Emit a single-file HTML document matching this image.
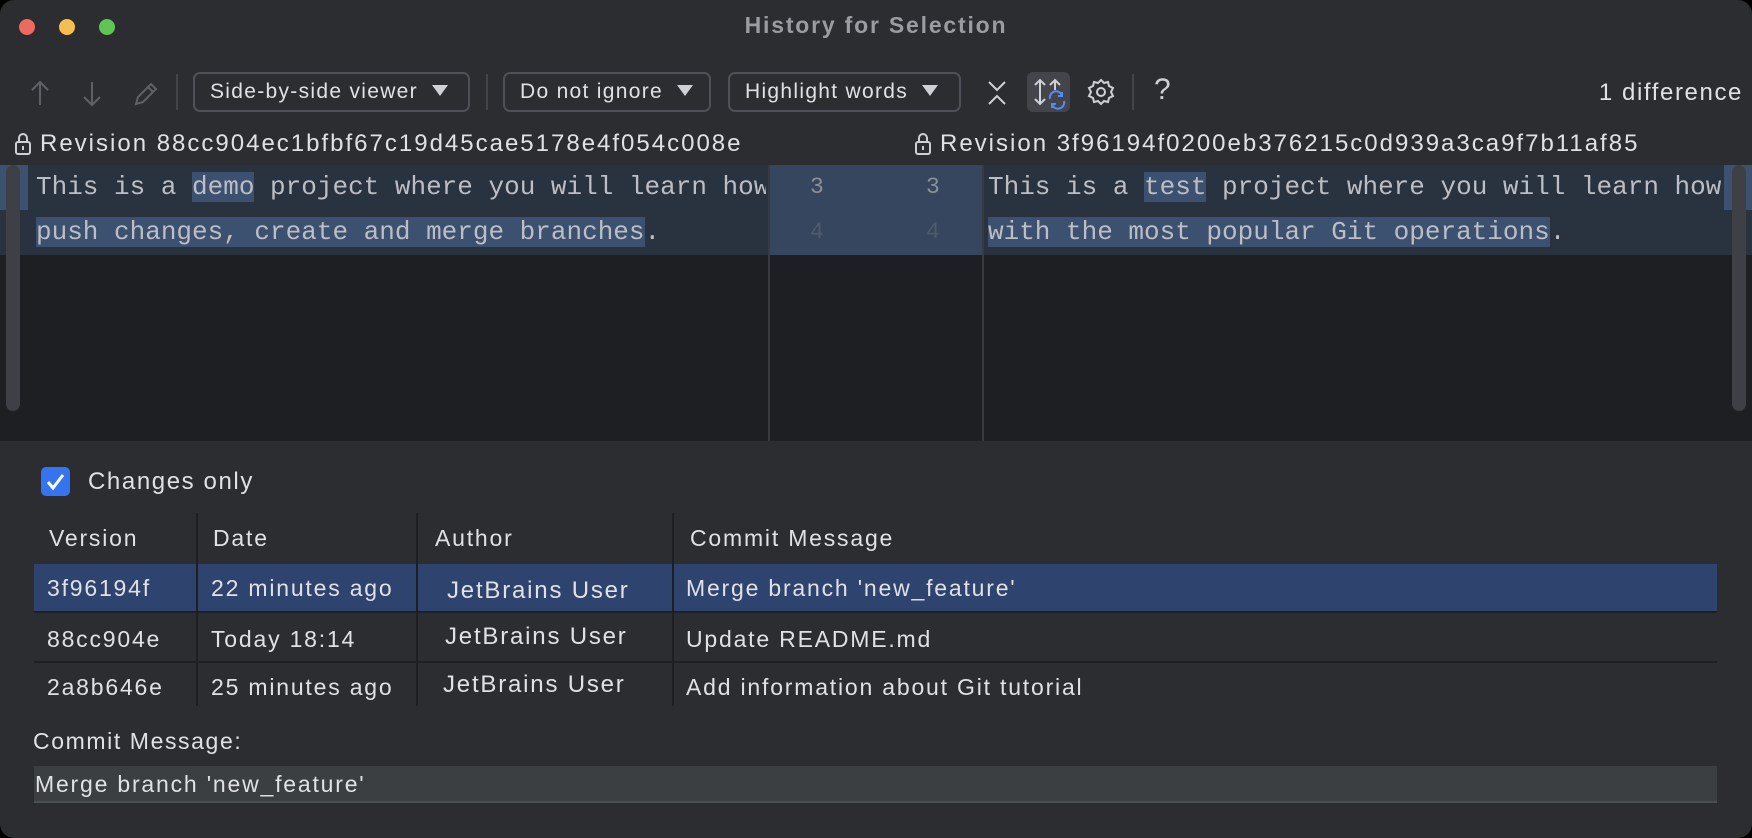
<!DOCTYPE html>
<html><head><meta charset="utf-8"><style>
*{box-sizing:border-box;margin:0;padding:0}
body{width:1752px;height:838px;background:#000;overflow:hidden;font-family:"Liberation Sans",sans-serif;color:#dfe1e5;letter-spacing:1.6px}
#win{position:absolute;left:0;top:0;width:1752px;height:838px;background:#2b2d30;border-radius:14px;overflow:hidden}
.a{position:absolute;white-space:nowrap}
.tl{position:absolute;top:19px;width:16px;height:16px;border-radius:50%}
.dd{position:absolute;top:72px;height:40px;border:2px solid #4e5157;border-radius:7px;font-size:21px;line-height:36px;padding-left:15px;letter-spacing:1.3px}
.dd i{display:inline-block;vertical-align:middle;margin-left:14px;margin-top:-3px;width:0;height:0;border-left:8px solid transparent;border-right:8px solid transparent;border-top:11px solid #ced0d6}
.sep{position:absolute;top:74px;width:2px;height:36px;background:#43454a}
.mono{font-family:"Liberation Mono",monospace;font-size:26px;color:#bcbec4;letter-spacing:0}
.hl{background:#3c5170}
.row{position:absolute;left:34px;width:1683px;font-size:23px;letter-spacing:1.8px}
.c{position:absolute;top:0;bottom:0;border-right:2px solid #1e1f22}
</style></head><body><div id="win">
<div class="tl" style="left:19px;background:#ed6a5e"></div>
<div class="tl" style="left:59px;background:#f5bf4f"></div>
<div class="tl" style="left:99px;background:#61c554"></div>
<div class="a" style="left:0;width:1752px;text-align:center;top:12px;font-size:23px;font-weight:bold;color:#9a9ca1;letter-spacing:1.8px">History for Selection</div>

<svg class="a" style="left:28px;top:78px" width="130" height="30" fill="none" stroke="#5f6166" stroke-width="2">
<path d="M12 4V27M4 12L12 4L20 12"/><path d="M64 4V27M56 19L64 27L72 19"/>
<path d="M108 26L110 19L123 6L128 11L115 24Z M120 9L125 14"/></svg>
<div class="sep" style="left:176px"></div>
<div class="dd" style="left:193px;width:277px">Side-by-side viewer<i></i></div>
<div class="sep" style="left:486px"></div>
<div class="dd" style="left:503px;width:208px">Do not ignore<i></i></div>
<div class="dd" style="left:728px;width:233px">Highlight words<i></i></div>
<svg class="a" style="left:985px;top:78px" width="24" height="30" fill="none" stroke="#ced0d6" stroke-width="2"><path d="M4 4L12 12L20 4M4 26L12 18L20 26"/></svg>
<div class="a" style="left:1027px;top:72px;width:43px;height:40px;background:#43454a;border-radius:6px"></div>
<svg class="a" style="left:1031px;top:76px" width="36" height="34" fill="none" stroke-width="2"><path stroke="#ced0d6" d="M9 4V28M4 9L9 4L14 9M4 23L9 28L14 23M24 4V14M19 9L24 4L29 9"/><path stroke="#548af7" d="M19 23A6 6 0 0 1 31 20M33 25A6 6 0 0 1 21 28M31 16V20H27M21 32V28H25"/></svg>
<svg class="a" style="left:1086px;top:77px" width="30" height="30" fill="none" stroke="#ced0d6" stroke-width="2"><circle cx="15" cy="15" r="4"/><path d="M15 3L18 6L22 5L23 9L27 11L25 15L27 19L23 21L22 25L18 24L15 27L12 24L8 25L7 21L3 19L5 15L3 11L7 9L8 5L12 6Z"/></svg>
<div class="sep" style="left:1132px"></div>
<div class="a" style="left:1154px;top:73px;font-size:30px;color:#ced0d6">?</div>
<div class="a" style="right:9px;top:79px;font-size:24px">1 difference</div>

<svg class="a" style="left:14px;top:132px" width="18" height="24" fill="none" stroke="#ced0d6" stroke-width="2"><rect x="2" y="10" width="14" height="12" rx="2"/><path d="M5 10V6A4 4 0 0 1 13 6V10"/><path d="M9 14V18"/></svg>
<div class="a" style="left:40px;top:130px;font-size:24px;letter-spacing:2px">Revision 88cc904ec1bfbf67c19d45cae5178e4f054c008e</div>
<svg class="a" style="left:914px;top:132px" width="18" height="24" fill="none" stroke="#ced0d6" stroke-width="2"><rect x="2" y="10" width="14" height="12" rx="2"/><path d="M5 10V6A4 4 0 0 1 13 6V10"/><path d="M9 14V18"/></svg>
<div class="a" style="left:940px;top:130px;font-size:24px;letter-spacing:2px">Revision 3f96194f0200eb376215c0d939a3ca9f7b11af85</div>

<div class="a" style="left:0;top:165px;width:1752px;height:276px;background:#1e1f22"></div>
<div class="a" style="left:0;top:165px;width:1752px;height:90px;background:#293340"></div>
<div class="a" style="left:768px;top:165px;width:2px;height:276px;background:#393b40"></div>
<div class="a" style="left:982px;top:165px;width:2px;height:276px;background:#393b40"></div>
<div class="a" style="left:770px;top:165px;width:212px;height:90px;background:#35465e"></div>
<div class="a" style="left:0;top:165px;width:28px;height:45px;background:#3d5270"></div>
<div class="a" style="left:1724px;top:165px;width:28px;height:45px;background:#3d5270"></div>
<div class="a" style="left:6px;top:165px;width:14px;height:246px;background:#3e4045;border-radius:7px"></div>
<div class="a" style="left:1732px;top:165px;width:14px;height:246px;background:#3e4045;border-radius:7px"></div>
<div class="a mono" style="left:36px;top:165px;line-height:45px;width:730px;overflow:hidden"><span>This is a </span><span class="hl">demo</span> project where you will learn how<br><span class="hl">push changes, create and merge branches</span>.</div>
<div class="a mono" style="left:988px;top:165px;line-height:45px;width:736px;overflow:hidden"><span>This is a </span><span class="hl">test</span> project where you will learn how<br><span class="hl">with the most popular Git operations</span>.</div>
<div class="a mono" style="left:810px;top:165px;line-height:45px;color:#8c8f96;font-size:23px">3<br><span style="color:#4f5b6c">4</span></div>
<div class="a mono" style="left:926px;top:165px;line-height:45px;color:#8c8f96;font-size:23px">3<br><span style="color:#4f5b6c">4</span></div>

<div class="a" style="left:41px;top:467px;width:29px;height:29px;background:#3574f0;border-radius:5px"></div>
<svg class="a" style="left:41px;top:467px" width="29" height="29" fill="none" stroke="#fff" stroke-width="3"><path d="M7 15L12 21L22 8"/></svg>
<div class="a" style="left:88px;top:468px;font-size:24px">Changes only</div>

<div class="a" style="left:34px;top:513px;width:1683px;height:193px;background:#1e1f22"></div>
<div class="row" style="top:513px;height:51px;background:#2b2d30">
<div class="c" style="left:0;width:164px"></div><div class="c" style="left:164px;width:220px"></div><div class="c" style="left:384px;width:256px"></div>
<span class="a" style="left:15px;top:12px">Version</span><span class="a" style="left:179px;top:12px">Date</span><span class="a" style="left:401px;top:12px">Author</span><span class="a" style="left:656px;top:12px">Commit Message</span></div>
<div class="row" style="top:564px;height:47px;background:#2e436e">
<div class="c" style="left:0;width:164px"></div><div class="c" style="left:164px;width:220px"></div><div class="c" style="left:384px;width:256px"></div>
<span class="a" style="left:13px;top:11px">3f96194f</span><span class="a" style="left:177px;top:11px">22 minutes ago</span><span class="a" style="left:413px;top:13px;font-size:24px">JetBrains User</span><span class="a" style="left:652px;top:11px">Merge branch 'new_feature'</span></div>
<div class="row" style="top:613px;height:48px;background:#2b2d30">
<div class="c" style="left:0;width:164px"></div><div class="c" style="left:164px;width:220px"></div><div class="c" style="left:384px;width:256px"></div>
<span class="a" style="left:13px;top:13px">88cc904e</span><span class="a" style="left:177px;top:13px">Today 18:14</span><span class="a" style="left:411px;top:10px;font-size:24px">JetBrains User</span><span class="a" style="left:652px;top:13px">Update README.md</span></div>
<div class="row" style="top:663px;height:43px;background:#2b2d30">
<div class="c" style="left:0;width:164px"></div><div class="c" style="left:164px;width:220px"></div><div class="c" style="left:384px;width:256px"></div>
<span class="a" style="left:13px;top:11px">2a8b646e</span><span class="a" style="left:177px;top:11px">25 minutes ago</span><span class="a" style="left:409px;top:8px;font-size:24px">JetBrains User</span><span class="a" style="left:652px;top:11px">Add information about Git tutorial</span></div>

<div class="a" style="left:33px;top:728px;font-size:23px">Commit Message:</div>
<div class="a" style="left:34px;top:766px;width:1683px;height:37px;background:#3c3f41;border-bottom:2px solid #4b4e52;font-size:23px;line-height:36px;padding-left:1px;letter-spacing:1.8px">Merge branch 'new_feature'</div>
</div></body></html>
